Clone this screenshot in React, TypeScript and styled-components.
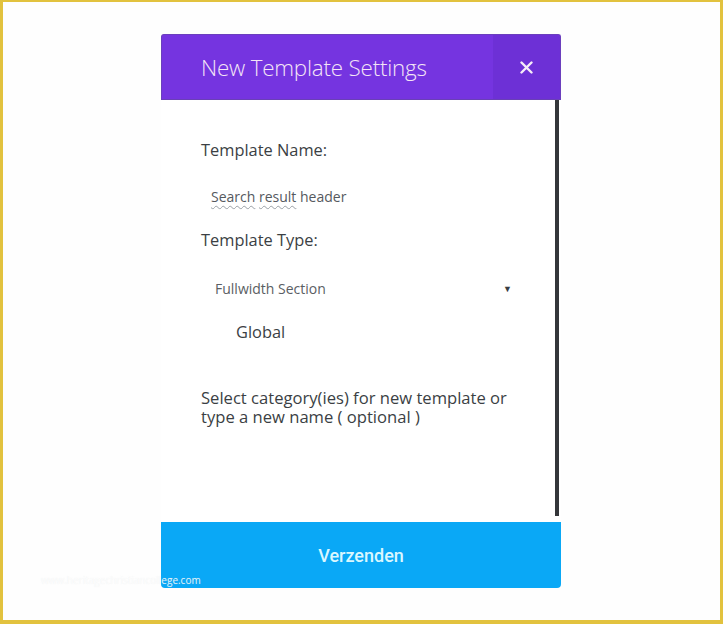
import React from "react";
import styled, { createGlobalStyle } from "styled-components";

const Global = createGlobalStyle`
  html, body { margin: 0; padding: 0; background: #ffffff; }
  * { box-sizing: border-box; }
`;

const Frame = styled.div`
  position: relative;
  width: 723px;
  height: 624px;
  border-style: solid;
  border-color: #e2c23e;
  border-width: 2px 3px 4px 3px;
  background: #fefefe;
  display: flex;
  flex-direction: column;
  align-items: flex-start;
  padding-left: 158px;
  padding-top: 32px;
  font-family: "Open Sans", "Noto Sans", sans-serif;
`;

const Modal = styled.div`
  width: 400px;
  display: flex;
  flex-direction: column;
`;

const Header = styled.div`
  height: 66px;
  display: flex;
  align-items: stretch;
  background: #7534e0;
  border-radius: 3px 3px 0 0;
  border-top: 1px solid #6b3fbd;
  border-bottom: 1px solid #6a40b6;
  border-left: 1px solid #6b3fbd;
  border-right: 1px solid #6b3fbd;
`;

const Title = styled.h1`
  flex: 1;
  margin: 0;
  padding-left: 39px;
  display: flex;
  align-items: center;
  font-family: "Open Sans", sans-serif;
  font-weight: 300;
  font-size: 22.4px;
  letter-spacing: -0.2px;
  color: #f4e4f6;
`;

const Close = styled.button`
  width: 67px;
  border: none;
  background: #6d30d6;
  color: #f6ecf8;
  display: flex;
  align-items: center;
  justify-content: center;
  padding: 0;
  border-radius: 0 3px 0 0;
`;

const Body = styled.div`
  height: 422px;
  display: flex;
  background: #ffffff;
`;

const Content = styled.div`
  flex: 1;
  padding: 39px 0 0 40px;
  display: flex;
  flex-direction: column;
`;

const Scrollbar = styled.div`
  width: 4px;
  margin-right: 2px;
  margin-bottom: 6px;
  background: #34363a;
`;

const Label = styled.div<{ $top: number; $indent?: number }>`
  margin-top: ${(p) => p.$top}px;
  padding-left: ${(p) => p.$indent ?? 0}px;
  font-size: 16.4px;
  line-height: 22px;
  color: #3b3f44;
`;

const InputRow = styled.div<{ $top: number; $indent: number }>`
  margin-top: ${(p) => p.$top}px;
  height: 36px;
  padding-left: ${(p) => p.$indent}px;
  display: flex;
  align-items: center;
  font-size: 14px;
  color: #55595e;
`;

const Spell = styled.span`
  text-decoration: underline wavy #9aa0a6;
  text-decoration-thickness: 1px;
  text-underline-offset: 3px;
`;

const SelectRow = styled(InputRow)`
  width: 314px;
  justify-content: space-between;
  color: #5a5e63;
`;

const Arrow = styled.span`
  font-size: 9px;
  color: #3a3d42;
  margin-right: 3px;
`;

const Note = styled.div`
  margin-top: 46px;
  font-size: 16.6px;
  line-height: 18.5px;
  color: #3b3f44;
`;

const Submit = styled.button`
  height: 66px;
  width: 400px;
  border: none;
  border-radius: 0 0 4px 4px;
  background: #0aa8f6;
  color: #d9f7ff;
  font-family: Roboto, "Noto Sans", sans-serif;
  font-weight: 500;
  font-size: 18px;
  margin-top: 0;
  padding: 0;
`;

const Watermark = styled.span`
  position: absolute;
  left: 38px;
  top: 571px;
  font-family: "Open Sans", sans-serif;
  font-size: 10px;
  color: rgba(255, 255, 255, 0.85);
  text-shadow: 0 0 1px rgba(200, 205, 210, 0.35);
`;

export default function App() {
  return (
    <>
      <Global />
      <Frame>
        <Modal>
          <Header>
            <Title>New Template Settings</Title>
            <Close aria-label="close">
              <svg width="13" height="13" viewBox="0 0 13 13">
                <path d="M1.5 1.5 L11.5 11.5 M11.5 1.5 L1.5 11.5" stroke="#f6ecf8" strokeWidth="2.4" strokeLinecap="round" />
              </svg>
            </Close>
          </Header>
          <Body>
            <Content>
              <Label $top={0}>Template Name:</Label>
              <InputRow $top={17} $indent={10}>
                <Spell>Search</Spell>&nbsp;<Spell>result</Spell>&nbsp;header
              </InputRow>
              <Label $top={15}>Template Type:</Label>
              <SelectRow $top={19} $indent={14}>
                <span>Fullwidth Section</span>
                <Arrow>▼</Arrow>
              </SelectRow>
              <Label $top={15} $indent={35}>Global</Label>
              <Note>
                Select category(ies) for new template or
                <br />
                type a new name ( optional )
              </Note>
            </Content>
            <Scrollbar />
          </Body>
          <Submit>Verzenden</Submit>
        </Modal>
        <Watermark>www.heritagechristiancollege.com</Watermark>
      </Frame>
    </>
  );
}
